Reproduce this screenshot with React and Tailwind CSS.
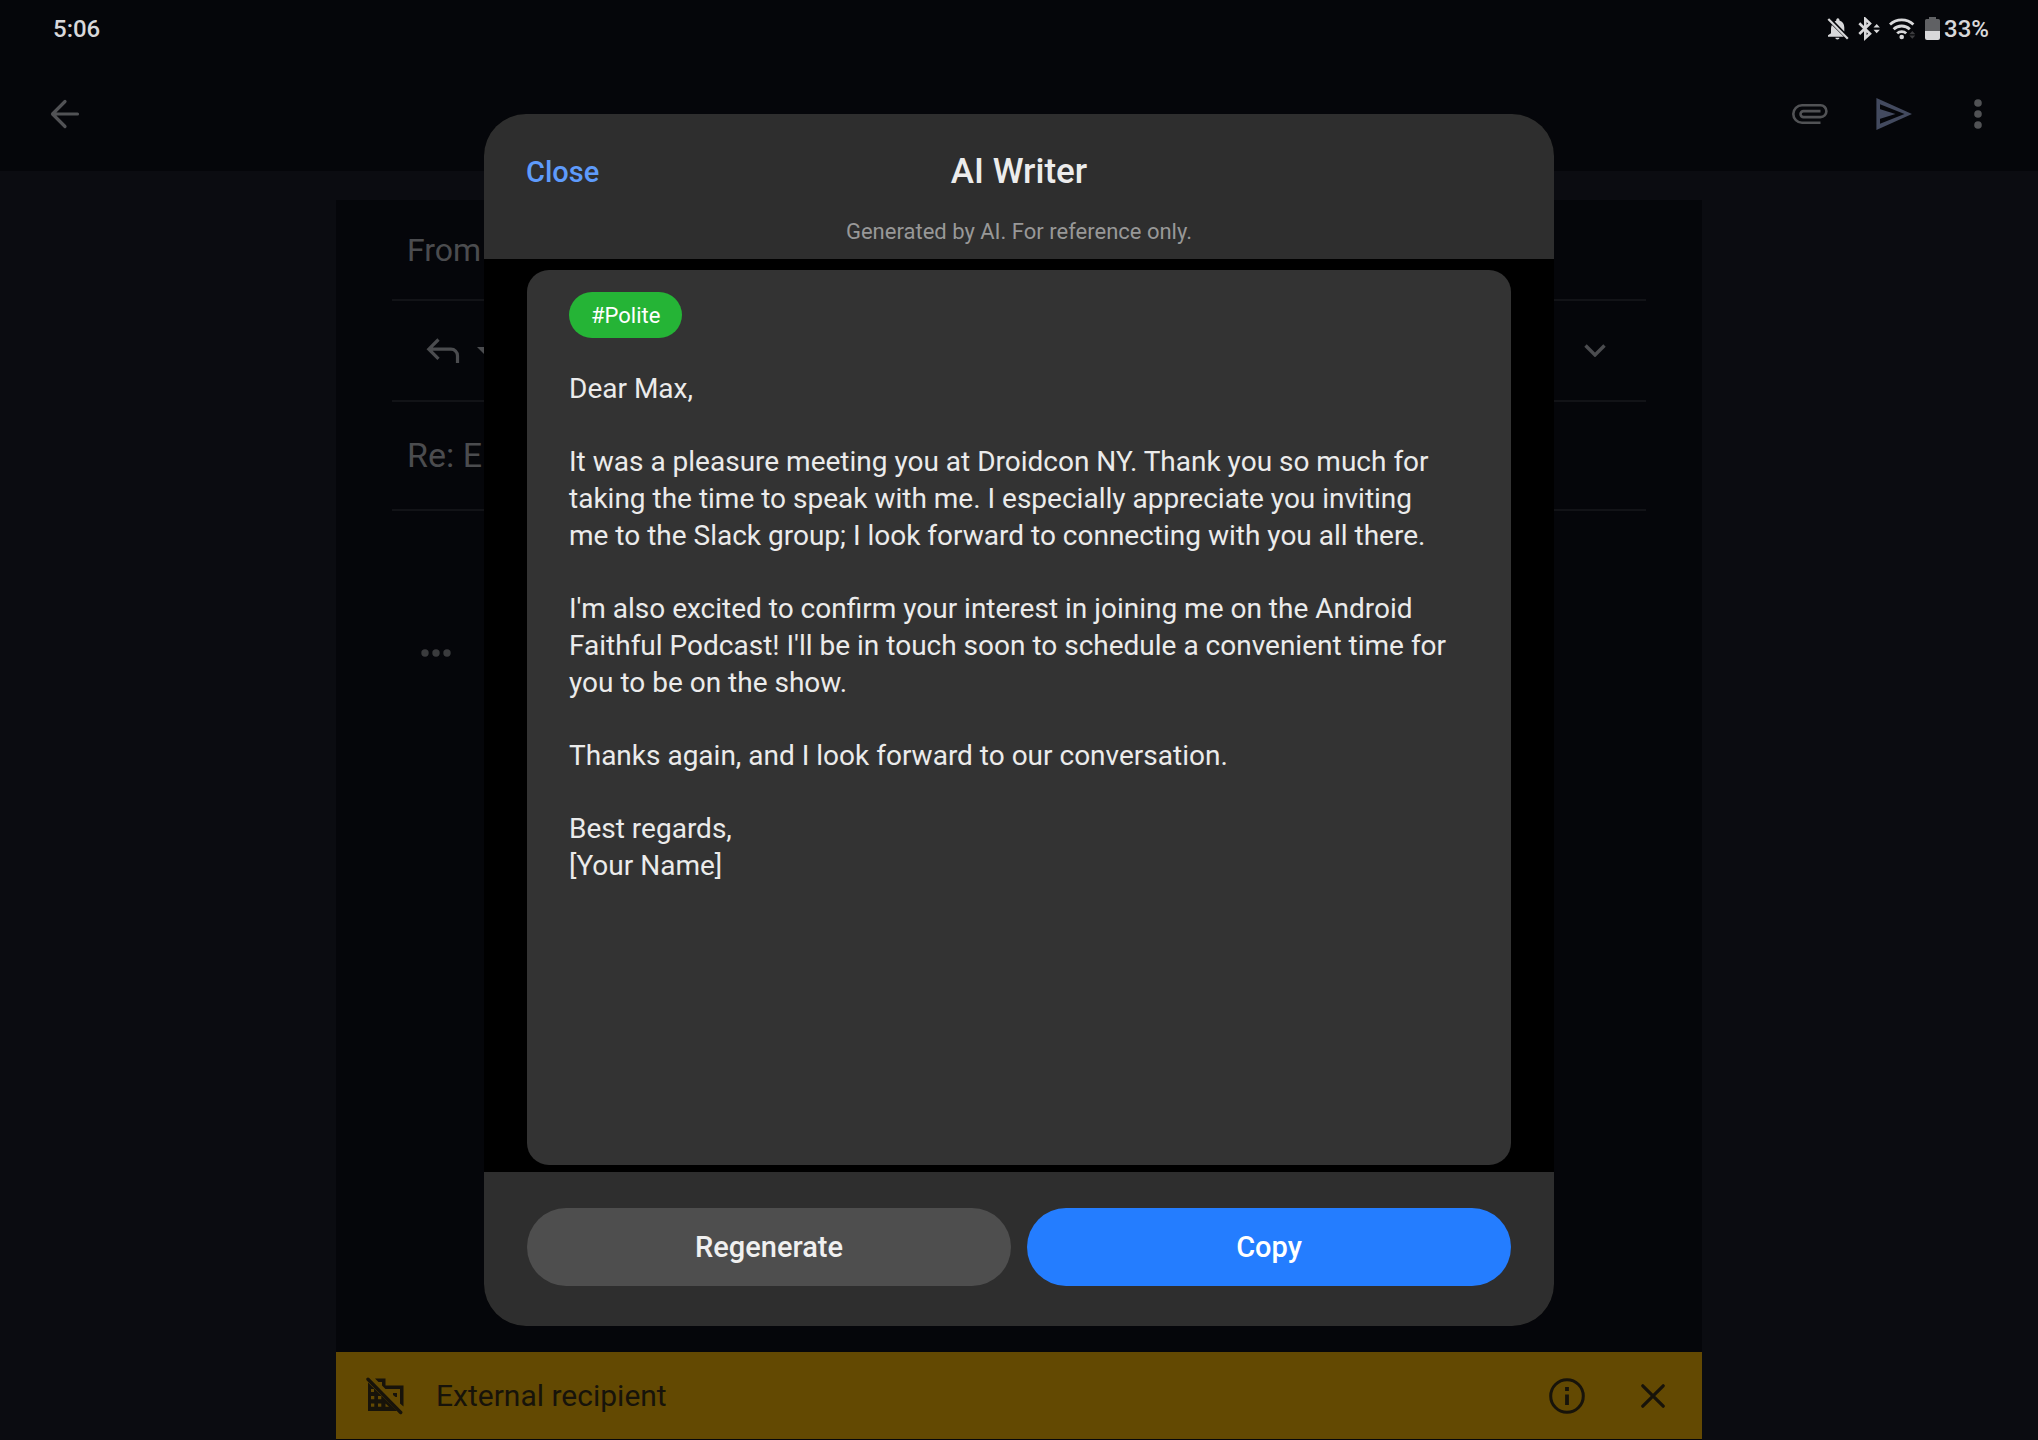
import React from 'react';

const letter = [
  ['Dear Max,'],
  ['It was a pleasure meeting you at Droidcon NY. Thank you so much for taking the time to speak with me. I especially appreciate you inviting me to the Slack group; I look forward to connecting with you all there.'],
  ["I'm also excited to confirm your interest in joining me on the Android Faithful Podcast! I'll be in touch soon to schedule a convenient time for you to be on the show."],
  ['Thanks again, and I look forward to our conversation.'],
  ['Best regards,', '[Your Name]'],
];

const StatusBar = () => (
  <div className="flex h-[57px] items-center justify-between pl-[53px] pr-[49px] text-2xl font-medium leading-6 text-[#d8d8da]">
    <span>5:06</span>
    <div className="flex items-center">
      {/* Notifications off */}
      <svg className="mr-[9px] h-6 w-[22px]" viewBox="0 0 22 24" fill="currentColor">
        <path d="M4.9 8C4.2 9.200 4 10.500 4 12v4.300l-3 2V19.800h15.800z" />
        <path d="M7.600 4.600L9.200 3.800C9.200 2 9.800 1.200 10.800 1.200s1.700.8 1.700 2.300c3 1 4.800 3.400 4.800 7V14.500z" />
        <path d="M8.400 20.800h4c0 1.100-.8 1.700-2 1.700s-2-.6-2-1.700z" />
        <path d="M1.300 2L20.800 21.800" stroke="currentColor" strokeWidth="2.200" />
      </svg>
      {/* Bluetooth */}
      <svg className="mr-[9px] h-6 w-[22px]" viewBox="0 0 22 24" fill="none">
        <path d="M1.300 6.300L12 16.700 7.300 21V2L12 6.500 1.300 17" stroke="currentColor" strokeWidth="2.600" />
        <path d="M18.700 7l3.200 3.500h-6.400zM15.500 12.800h6.400l-3.200 3.500z" fill="currentColor" />
      </svg>
      {/* Wifi */}
      <svg className="mr-[9px] h-6 w-[27px]" viewBox="0 0 27 24" fill="none">
        <circle cx="12.700" cy="20" r="2.300" fill="currentColor" />
        <path d="M1 7.500C7.500 1.300 17.900 1.300 24.400 7.500M4.600 12.200c4.400-4.300 11.800-4.300 16.200 0M8.200 16.400c2.400-2.500 6.600-2.500 9 0" stroke="currentColor" strokeWidth="2.800" />
        <path d="M23.300 14l3 3.200h-6zM20.300 18.600h6l-3 3.200z" fill="#3c3c3f" />
      </svg>
      {/* Battery */}
      <svg className="mr-1 h-6 w-[15px]" viewBox="0 0 15 24">
        <path d="M4 0h7v2h2.500A1.500 1.500 0 0 1 15 3.500V14H0V3.500A1.500 1.500 0 0 1 1.500 2H4z" fill="#606164" />
        <path d="M0 14h15v7a2 2 0 0 1-2 2H2a2 2 0 0 1-2-2z" fill="currentColor" />
      </svg>
      <span>33%</span>
    </div>
  </div>
);

const Toolbar = () => (
  <div className="flex h-[114px] items-center justify-between pl-[43px] pr-[38px] text-[#515255]">
    <button type="button" aria-label="Back" className="flex h-11 w-11 items-center justify-center">
      <svg className="h-[30px] w-[30px]" viewBox="0 0 30 30" fill="none" stroke="currentColor" strokeWidth="3.200" strokeLinecap="round" strokeLinejoin="round">
        <path d="M15 2.500L2.500 15 15 27.500M3 15h24.500" />
      </svg>
    </button>
    <div className="flex items-center gap-10">
      <button type="button" aria-label="Attach file" className="flex h-11 w-11 items-center justify-center">
        <svg className="h-5 w-9" viewBox="0 0 36 20" fill="none" stroke="currentColor" strokeWidth="2.600">
          <path d="M28.500 18.700H10a8.700 8.700 0 0 1 0-17.400h18.500a5.900 5.900 0 0 1 0 11.800h-17a3 3 0 0 1 0-6h17" />
        </svg>
      </button>
      <button type="button" aria-label="Send" className="flex h-11 w-11 items-center justify-center text-[#434a5f]">
        <svg className="h-8 w-9" viewBox="0 0 36 32" fill="currentColor">
          <path fillRule="evenodd" d="M.4 0L36 16 .4 32zM4 6.200v19.600L28.500 16z" />
          <path d="M3.500 11L19.500 16l-16 5z" />
        </svg>
      </button>
      <button type="button" aria-label="More options" className="flex h-11 w-11 items-center justify-center">
        <svg className="h-[30px] w-2" viewBox="0 0 8 30" fill="currentColor">
          <circle cx="4" cy="4" r="3.800" />
          <circle cx="4" cy="15" r="3.800" />
          <circle cx="4" cy="26" r="3.800" />
        </svg>
      </button>
    </div>
  </div>
);

const ComposePanel = () => (
  <main className="mx-auto mt-[29px] flex w-full max-w-[1366px] flex-1 flex-col bg-[#05060a] text-[#4b4c4f]">
    <div className="px-14">
      <div className="flex h-[101px] items-center border-b-2 border-[#121317] pl-[15px] text-[32px]">From</div>
      <div className="flex h-[101px] items-center border-b-2 border-[#121317] pl-[34px] pr-10">
        <button type="button" aria-label="Reply type" className="flex items-center gap-[17px]">
          <svg className="h-[26px] w-[34px]" viewBox="0 0 34 26" fill="none" stroke="currentColor" strokeWidth="3.200">
            <path d="M12.500 1.500L2.800 11.200l9.700 9.700M3 11.200h22a6.500 6.500 0 0 1 6.500 6.500V25" />
          </svg>
          <svg className="h-[7px] w-[14px]" viewBox="0 0 14 7" fill="currentColor">
            <path d="M0 0h14L7 7z" />
          </svg>
        </button>
        <button type="button" aria-label="Show more recipients" className="ml-auto">
          <svg className="h-[13px] w-[22px]" viewBox="0 0 22 13" fill="none" stroke="currentColor" strokeWidth="3.400">
            <path d="M1.500 1.500L11 11l9.500-9.500" />
          </svg>
        </button>
      </div>
      <div className="flex h-[109px] items-center border-b-2 border-[#121317] pl-[15px]">
        <input aria-label="Subject" defaultValue="Re: E" className="w-full bg-transparent text-[34px] outline-none" />
      </div>
      <button type="button" aria-label="Show quoted text" className="ml-[29px] mt-[138px] flex text-[#3a3b3d]">
        <svg className="h-2 w-[30px]" viewBox="0 0 30 8" fill="currentColor">
          <circle cx="4" cy="4" r="3.700" />
          <circle cx="15" cy="4" r="3.700" />
          <circle cx="26" cy="4" r="3.700" />
        </svg>
      </button>
    </div>

    {/* External recipient banner */}
    <div className="mb-px mt-auto flex h-[87px] items-center bg-[#634902] pl-[30px] pr-[33px] text-[#17130a]">
      <svg className="h-[38px] w-[38px]" viewBox="0 0 38 38" fill="currentColor">
        <path fillRule="evenodd" d="M2 5.500L31 34H2zM5 12v3h3v-3zM5 19v3.200h3.300V19zM12 19v3.200h3.300V19zM5 26.500v3.200h3.300v-3.200zM12 26.500v3.200h3.300v-3.200zM19.500 26.500v3.200H23z" />
        <path d="M9 1.500h10.500V8.500H37.500V29.500L34 26.500V12H19.500L16 8.500V5H12.500z" />
        <path d="M27 16h4v4h-1.500L27 18z" />
        <path d="M2 2.200L34.700 35.500" stroke="currentColor" strokeWidth="3.400" strokeLinecap="round" />
      </svg>
      <span className="ml-8 text-[30px]">External recipient</span>
      <div className="ml-auto flex items-center gap-[52px]">
        <button type="button" aria-label="Details">
          <svg className="h-9 w-9" viewBox="0 0 36 36" fill="none" stroke="currentColor">
            <circle cx="18" cy="18" r="16.300" strokeWidth="3" />
            <path d="M18 9v4M18 16.500v10.500" strokeWidth="3.800" />
          </svg>
        </button>
        <button type="button" aria-label="Dismiss" className="px-1">
          <svg className="h-6 w-6" viewBox="0 0 24 24" fill="none" stroke="currentColor" strokeWidth="3.200" strokeLinecap="round">
            <path d="M1.800 1.800l20.400 20.400M22.200 1.800L1.800 22.200" />
          </svg>
        </button>
      </div>
    </div>
  </main>
);

const AiWriterDialog = () => (
  <div className="fixed inset-0 flex justify-center py-[114px]">
    <div role="dialog" aria-labelledby="writer-title" className="flex w-full max-w-[1070px] flex-col overflow-hidden rounded-[42px] bg-black">
      <header className="bg-[#2e2e2e] px-[42px] pb-[14px] pt-[38px] text-center">
        <div className="grid h-10 grid-cols-3 items-center">
          <button type="button" className="justify-self-start text-[29px] font-medium leading-10 text-[#5e9bfb]">Close</button>
          <h2 id="writer-title" className="text-[35px] font-medium leading-10 text-[#ececec]">AI Writer</h2>
        </div>
        <p className="mt-[27px] text-[22px] leading-[26px] text-[#989898]">Generated by AI. For reference only.</p>
      </header>

      <section className="mx-[43px] mb-[7px] mt-[11px] flex-1 overflow-y-auto rounded-[22px] bg-[#333333] pl-[42px] pr-[60px] pt-[22px]">
        <span className="inline-flex h-[46px] items-center rounded-full bg-[#25b436] px-[22px] text-[22px] text-white">#Polite</span>
        <div className="mt-8 flex flex-col gap-9 text-[28px] leading-[37px] text-[#ebebeb]">
          {letter.map((lines) => (
            <p key={lines[0]}>
              {lines.map((line) => (
                <span key={line} className="block">{line}</span>
              ))}
            </p>
          ))}
        </div>
      </section>

      <footer className="grid grid-cols-2 gap-4 bg-[#2e2e2e] px-[43px] pb-10 pt-9">
        <button type="button" className="h-[78px] rounded-full bg-[#4e4e4e] pt-0.5 text-[29px] font-medium text-[#f0f0f0]">Regenerate</button>
        <button type="button" className="h-[78px] rounded-full bg-[#247dff] pt-0.5 text-[29px] font-medium text-white">Copy</button>
      </footer>
    </div>
  </div>
);

const App = () => (
  <div className="flex min-h-screen flex-col bg-[#0b0c11] font-['Roboto',sans-serif]">
    <div className="bg-[#05060a]">
      <StatusBar />
      <Toolbar />
    </div>
    <ComposePanel />
    <AiWriterDialog />
  </div>
);

export default App;
